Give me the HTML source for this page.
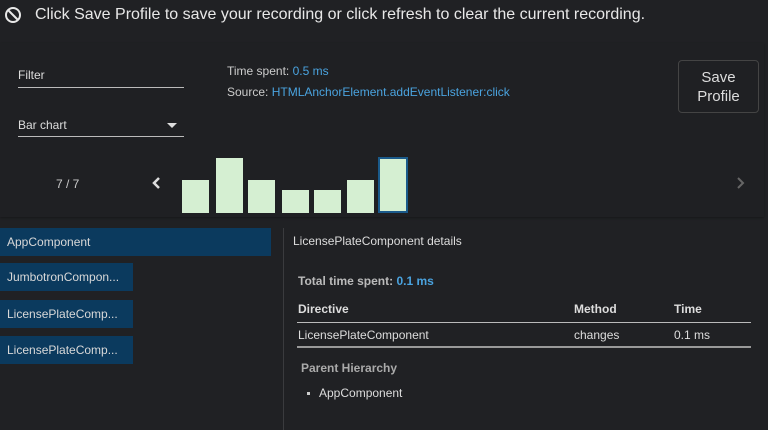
<!DOCTYPE html>
<html><head><style>
body{margin:0;width:768px;height:430px;background:#202124;font-family:"Liberation Sans",sans-serif;color:#e0e0e0;position:relative;overflow:hidden;font-size:12px}
.a{position:absolute}
.bar{position:absolute;background:#d5efd2;bottom:217px;width:27px}
.item{position:absolute;left:0;background:#0b3a5e;height:28px;line-height:28px;padding-left:7px;box-sizing:border-box;font-size:12px;color:#d8d8d8}
.blue{color:#4aa3df}
</style></head><body>
<svg class="a" style="left:4px;top:6px" width="18" height="18" viewBox="0 0 18 18"><circle cx="9" cy="9" r="7" fill="none" stroke="#e8e8e8" stroke-width="2"/><line x1="4" y1="4" x2="14" y2="14" stroke="#e8e8e8" stroke-width="2"/></svg>
<div class="a" style="left:35px;top:6px;font-size:16px;color:#e8e8e8">Click Save Profile to save your recording or click refresh to clear the current recording.</div>
<div class="a" style="left:0;top:43px;width:764px;height:174px;background:#1f2023;box-shadow:0 1px 2px rgba(0,0,0,.3)"></div>
<div class="a" style="left:18px;top:68px;font-size:12px;color:#ddd">Filter</div>
<div class="a" style="left:18px;top:87px;width:166px;height:1px;background:#bbb"></div>
<div class="a" style="left:18px;top:118px;font-size:12px;color:#ddd">Bar chart</div>
<div class="a" style="left:167px;top:123px;width:0;height:0;border-left:5px solid transparent;border-right:5px solid transparent;border-top:5px solid #ddd"></div>
<div class="a" style="left:18px;top:136px;width:166px;height:1px;background:#bbb"></div>
<div class="a" style="left:227px;top:64px;font-size:12px;color:#ccc">Time spent: <span class="blue">0.5 ms</span></div>
<div class="a" style="left:227px;top:85px;font-size:12px;color:#ccc">Source: <span class="blue">HTMLAnchorElement.addEventListener:click</span></div>
<div class="a" style="left:678px;top:60px;width:81px;height:53px;border:1px solid #444;border-radius:4px;box-sizing:border-box;text-align:center;font-size:15px;line-height:19px;padding-top:7px;color:#ddd">Save<br>Profile</div>
<div class="a" style="left:56px;top:177px;font-size:12px;color:#ccc">7 / 7</div>
<svg class="a" style="left:152px;top:177px" width="10" height="12"><path d="M7 1L2 6L7 11" fill="none" stroke="#ddd" stroke-width="2.5"/></svg>
<svg class="a" style="left:736px;top:177px" width="10" height="12"><path d="M2 1L7 6L2 11" fill="none" stroke="#666" stroke-width="2"/></svg>
<div class="bar" style="left:182px;height:33px;top:180px"></div>
<div class="bar" style="left:216px;height:55px;top:158px"></div>
<div class="bar" style="left:248px;height:33px;top:180px"></div>
<div class="bar" style="left:282px;height:23px;top:190px"></div>
<div class="bar" style="left:314px;height:23px;top:190px"></div>
<div class="bar" style="left:347px;height:33px;top:180px"></div>
<div class="bar" style="left:378px;height:56px;top:157px;width:30px;border:2px solid #1a5a8a;box-sizing:border-box"></div>
<div class="item" style="top:228px;width:271px">AppComponent</div>
<div class="item" style="top:263px;width:133px">JumbotronCompon...</div>
<div class="item" style="top:300px;width:133px">LicensePlateComp...</div>
<div class="item" style="top:336px;width:133px">LicensePlateComp...</div>
<div class="a" style="left:283px;top:228px;width:1px;height:202px;background:#3a3b3e"></div>
<div class="a" style="left:293px;top:234px;font-size:12px;color:#ddd">LicensePlateComponent details</div>
<div class="a" style="left:298px;top:274px;font-size:12px;font-weight:bold;color:#bbb">Total time spent: <span class="blue">0.1 ms</span></div>
<div class="a" style="left:298px;top:302px;font-size:12px;font-weight:bold;color:#ddd">Directive</div>
<div class="a" style="left:574px;top:302px;font-size:12px;font-weight:bold;color:#ddd">Method</div>
<div class="a" style="left:674px;top:302px;font-size:12px;font-weight:bold;color:#ddd">Time</div>
<div class="a" style="left:297px;top:322px;width:454px;height:1px;background:#bbb"></div>
<div class="a" style="left:298px;top:328px;font-size:12px;color:#ddd">LicensePlateComponent</div>
<div class="a" style="left:574px;top:328px;font-size:12px;color:#ddd">changes</div>
<div class="a" style="left:674px;top:328px;font-size:12px;color:#ddd">0.1 ms</div>
<div class="a" style="left:297px;top:346px;width:454px;height:2px;background:#999"></div>
<div class="a" style="left:301px;top:361px;font-size:12px;font-weight:bold;color:#aaa">Parent Hierarchy</div>
<div class="a" style="left:307px;top:392px;width:3px;height:3px;background:#ccc"></div>
<div class="a" style="left:319px;top:386px;font-size:12px;color:#ddd">AppComponent</div>
</body></html>
